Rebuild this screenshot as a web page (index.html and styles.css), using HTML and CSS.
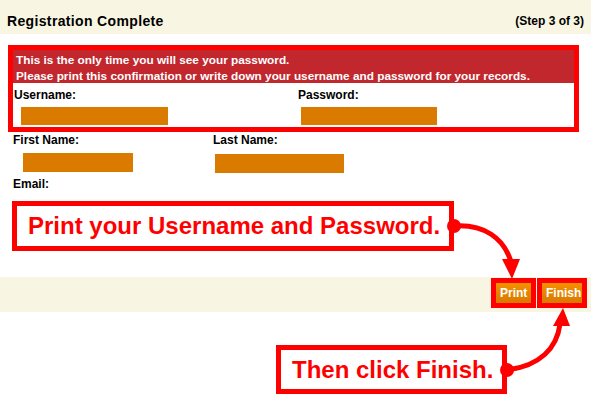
FILE: index.html
```html
<!DOCTYPE html>
<html>
<head>
<meta charset="utf-8">
<link rel="stylesheet" href="styles.css">
</head>
<body>
<div class="page">
  <div class="header">
    <span class="title">Registration Complete</span>
    <span class="step">(Step 3 of 3)</span>
  </div>

  <div class="alert">
    <div class="banner">
      <div>This is the only time you will see your password.</div>
      <div>Please print this confirmation or write down your username and password for your records.</div>
    </div>
    <div class="creds">
      <div class="field">
        <div class="label">Username:</div>
        <div class="bar bar-user"></div>
      </div>
      <div class="field">
        <div class="label">Password:</div>
        <div class="bar bar-pass"></div>
      </div>
    </div>
  </div>

  <div class="names">
    <div class="field">
      <div class="label">First Name:</div>
      <div class="bar bar-first"></div>
    </div>
    <div class="field">
      <div class="label">Last Name:</div>
      <div class="bar bar-last"></div>
    </div>
  </div>
  <div class="label email">Email:</div>

  <div class="callout callout-print">Print your Username and Password.</div>

  <div class="actions">
    <span class="btn"><span class="btn-inner">Print</span></span>
    <span class="btn"><span class="btn-inner">Finish</span></span>
  </div>

  <div class="callout callout-finish">Then click Finish.</div>

  <svg class="arrows" width="600" height="400" viewBox="0 0 600 400">
    <path d="M454 226 C 484 224, 504 238, 511 262" fill="none" stroke="#ff0000" stroke-width="5"/>
    <polygon points="502,259 520,259 512,279" fill="#ff0000"/>
    <circle cx="454" cy="226" r="7" fill="#ff0000"/>
    <path d="M507 370 C 540 366, 557 348, 560 324" fill="none" stroke="#ff0000" stroke-width="5"/>
    <polygon points="553,326 570,326 563,308" fill="#ff0000"/>
    <circle cx="507" cy="370" r="7" fill="#ff0000"/>
  </svg>
</div>
</body>
</html>
```

FILE: styles.css
```css
* { box-sizing: border-box; }

html, body {
  margin: 0;
  padding: 0;
  background: #ffffff;
}

body {
  font-family: "Liberation Sans", Arial, sans-serif;
  color: #000;
}

.page {
  position: relative;
  width: 600px;
  height: 400px;
  overflow: hidden;
}

.header {
  width: 591px;
  height: 34px;
  background: #f8f6e3;
  display: flex;
  justify-content: space-between;
  align-items: center;
  padding: 8px 7px 0 7px;
  font-weight: bold;
}

.title {
  font-size: 14px;
  letter-spacing: 0.35px;
}

.step {
  font-size: 12px;
}

.alert {
  margin: 11px 0 0 8px;
  width: 571px;
  height: 87px;
  border: 5px solid #ff0000;
  background: #fff;
}

.banner {
  background: #c1272d;
  color: #fff;
  font-weight: bold;
  font-size: 11.8px;
  line-height: 16px;
  padding: 2px 0 0 3px;
  height: 33px;
}

.creds {
  display: grid;
  grid-template-columns: 284px 1fr;
}

.label {
  font-weight: bold;
  font-size: 12px;
  line-height: 16px;
}

.creds .label {
  padding-left: 1px;
  margin-top: 4px;
}

.bar {
  background: #da7b00;
  height: 18px;
}

.bar-user {
  width: 147px;
  margin: 4px 0 0 8px;
}

.bar-pass {
  width: 136px;
  margin: 4px 0 0 4px;
}

.names {
  display: grid;
  grid-template-columns: 200px 1fr;
  padding-left: 13px;
}

.bar-first {
  width: 110px;
  height: 19px;
  margin: 5px 0 0 10px;
}

.bar-last {
  width: 129px;
  height: 19px;
  margin: 6px 0 0 2px;
}

.email {
  padding-left: 13px;
  margin-top: 3px;
}

.callout {
  border: 5px solid #ff0000;
  background: #fff;
  color: #ff0000;
  font-weight: bold;
  font-size: 24px;
  display: flex;
  align-items: center;
  padding-left: 11px;
}

.callout-print {
  margin: 9px 0 0 12px;
  width: 442px;
  height: 50px;
}

.actions {
  margin-top: 26px;
  width: 591px;
  height: 35px;
  background: #f8f6e3;
  display: flex;
  justify-content: flex-end;
  align-items: flex-start;
  gap: 1px;
  padding: 1px 4px 0 0;
}

.btn {
  display: block;
  border: 5px solid #ff0000;
}

.btn-inner {
  display: block;
  height: 20px;
  padding: 0 4px;
  background: linear-gradient(#f39200, #d97800);
  color: #fff;
  font-weight: bold;
  font-size: 12px;
  line-height: 20px;
  text-align: center;
}

.btn:first-child .btn-inner { width: 35px; }
.btn:last-child .btn-inner { width: 40px; }

.callout-finish {
  margin: 33px 0 0 276px;
  width: 231px;
  height: 49px;
}

.arrows {
  position: absolute;
  left: 0;
  top: 0;
  pointer-events: none;
}
```
